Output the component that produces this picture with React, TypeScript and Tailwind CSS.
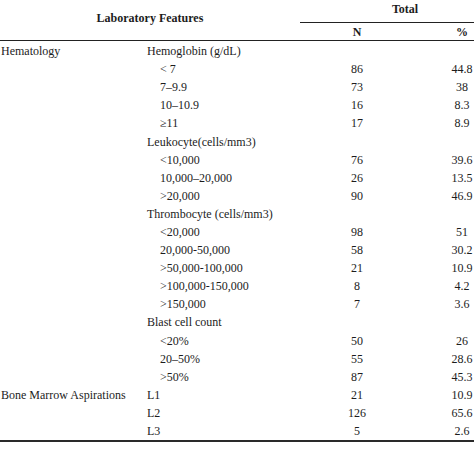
import React from 'react';

type Row = {
  group?: string;
  label: string;
  indent?: boolean;
  n?: string;
  pct?: string;
};

const rows: Row[] = [
  { group: 'Hematology', label: 'Hemoglobin (g/dL)' },
  { label: '< 7', indent: true, n: '86', pct: '44.8' },
  { label: '7–9.9', indent: true, n: '73', pct: '38' },
  { label: '10–10.9', indent: true, n: '16', pct: '8.3' },
  { label: '≥11', indent: true, n: '17', pct: '8.9' },
  { label: 'Leukocyte(cells/mm3)' },
  { label: '<10,000', indent: true, n: '76', pct: '39.6' },
  { label: '10,000–20,000', indent: true, n: '26', pct: '13.5' },
  { label: '>20,000', indent: true, n: '90', pct: '46.9' },
  { label: 'Thrombocyte (cells/mm3)' },
  { label: '<20,000', indent: true, n: '98', pct: '51' },
  { label: '20,000-50,000', indent: true, n: '58', pct: '30.2' },
  { label: '>50,000-100,000', indent: true, n: '21', pct: '10.9' },
  { label: '>100,000-150,000', indent: true, n: '8', pct: '4.2' },
  { label: '>150,000', indent: true, n: '7', pct: '3.6' },
  { label: 'Blast cell count' },
  { label: '<20%', indent: true, n: '50', pct: '26' },
  { label: '20–50%', indent: true, n: '55', pct: '28.6' },
  { label: '>50%', indent: true, n: '87', pct: '45.3' },
  { group: 'Bone Marrow Aspirations', label: 'L1', n: '21', pct: '10.9' },
  { label: 'L2', n: '126', pct: '65.6' },
  { label: 'L3', n: '5', pct: '2.6' },
];

export default function App() {
  return (
    <div className="w-[474px] h-[462px] overflow-hidden bg-white text-[#1c1c1c] font-['Liberation_Serif',serif] text-[12px] leading-none">
      <div className="w-[510px]">
        {/* header */}
        <div className="flex h-[41px] border-b border-[#222]">
          <div className="w-[300px] flex justify-center pt-[12px] font-bold">Laboratory Features</div>
          <div className="w-[210px] flex flex-col font-bold">
            <div className="h-[23px] border-b border-[#222] flex justify-center pt-[3px]">Total</div>
            <div className="flex flex-1 items-center">
              <div className="w-[114px] text-center">N</div>
              <div className="w-[96px] text-center">%</div>
            </div>
          </div>
        </div>

        {/* body */}
        <div className="flex flex-col pt-[1px] border-b-2 border-[#2a2a2a]">
          {rows.map((r, i) => (
            <div key={i} className="flex h-[18.1px] items-center">
              <div className="w-[147px] pl-[1px] whitespace-nowrap">{r.group ?? ''}</div>
              <div className={`w-[153px] whitespace-nowrap ${r.indent ? 'pl-[13px]' : ''}`}>{r.label}</div>
              <div className="w-[114px] text-center">{r.n ?? ''}</div>
              <div className="w-[96px] text-center">{r.pct ?? ''}</div>
            </div>
          ))}
        </div>
      </div>
    </div>
  );
}
